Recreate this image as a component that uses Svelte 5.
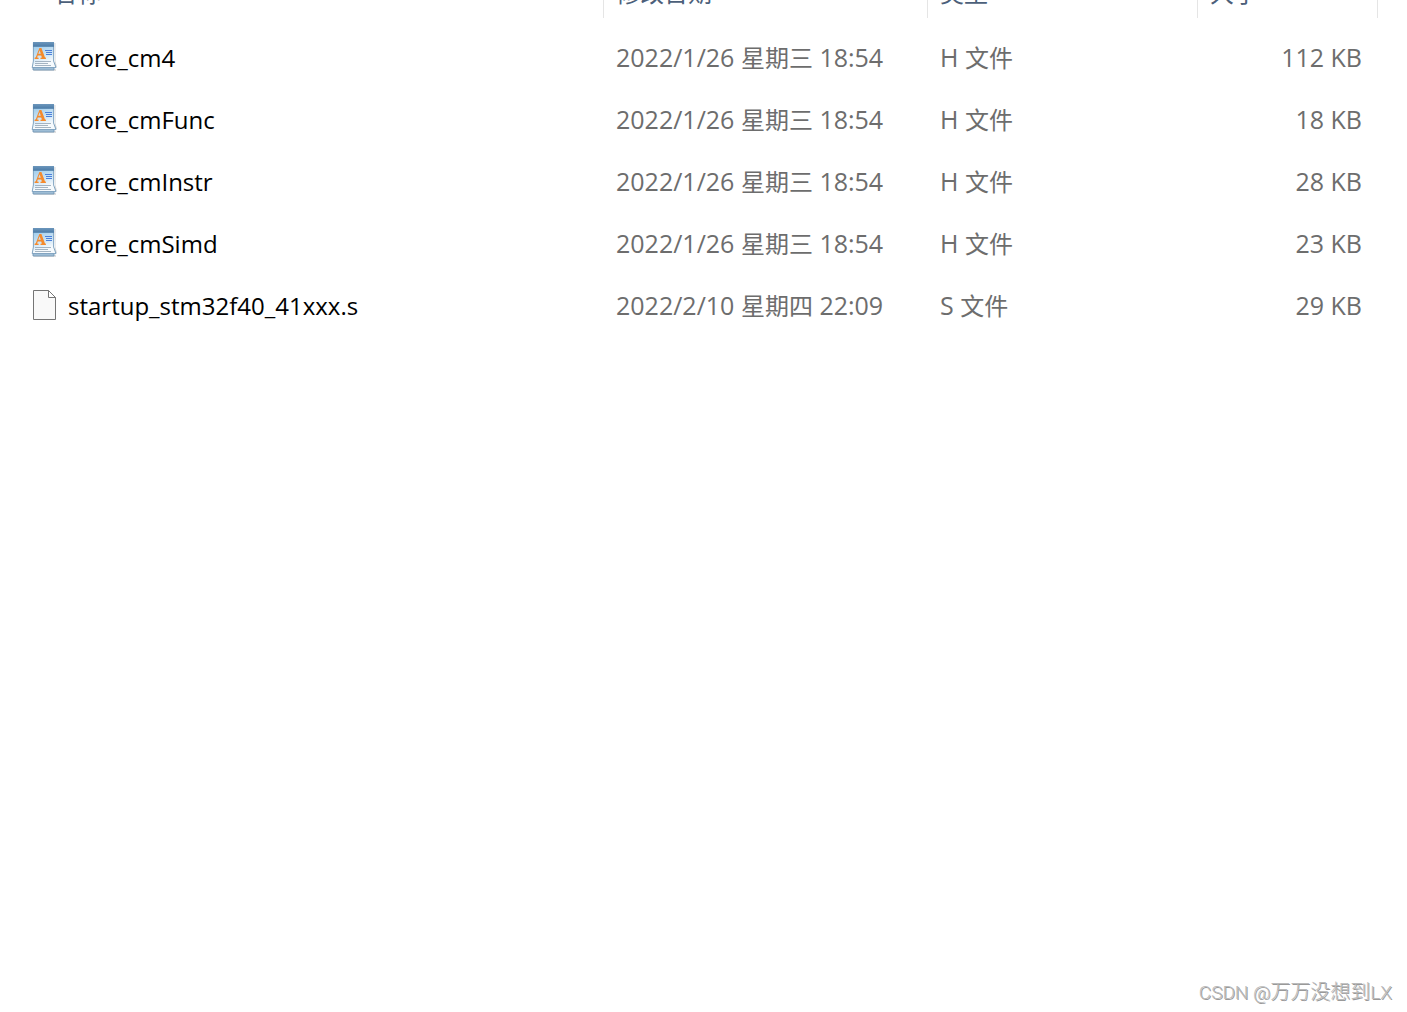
<script>
  const columns = ['名称', '修改日期', '类型', '大小'];
  const files = [
    { name: 'core_cm4', date: '2022/1/26', day: '星期三', time: '18:54', kind: 'H', size: '112 KB', icon: 'document' },
    { name: 'core_cmFunc', date: '2022/1/26', day: '星期三', time: '18:54', kind: 'H', size: '18 KB', icon: 'document' },
    { name: 'core_cmInstr', date: '2022/1/26', day: '星期三', time: '18:54', kind: 'H', size: '28 KB', icon: 'document' },
    { name: 'core_cmSimd', date: '2022/1/26', day: '星期三', time: '18:54', kind: 'H', size: '23 KB', icon: 'document' },
    { name: 'startup_stm32f40_41xxx.s', date: '2022/2/10', day: '星期四', time: '22:09', kind: 'S', size: '29 KB', icon: 'blank' }
  ];
</script>

<svg class="defs" aria-hidden="true">
  <defs>
    <linearGradient id="page" x1="0" y1="0" x2="0.3" y2="1">
      <stop offset="0.2" stop-color="#a5cfec" />
      <stop offset="0.6" stop-color="#cde5f6" />
      <stop offset="0.9" stop-color="#f6fafd" />
    </linearGradient>
    <linearGradient id="binding" x1="0" y1="0" x2="0" y2="1">
      <stop offset="0" stop-color="#6c96bc" />
      <stop offset="1" stop-color="#4a7ba7" />
    </linearGradient>
  </defs>
</svg>

<main>
  <table>
    <colgroup>
      <col />
      <col class="date-col" />
      <col class="type-col" />
      <col class="size-col" />
      <col class="end-col" />
    </colgroup>
    <thead>
      <tr>
        {#each columns as label}
          <th scope="col"><div class="head"><span>{label}</span></div></th>
        {/each}
        <td></td>
      </tr>
    </thead>
    <tbody>
      {#each files as file}
        <tr>
          <td class="name">
            <div class="file">
              {#if file.icon === 'document'}
                <svg class="icon" viewBox="0 1 28 32" aria-hidden="true">
                  <path d="M3 28h23v2H4z" fill="#000" opacity=".12" />
                  <path d="M24.500 2h1v18l1.500 6h-2z" fill="#000" opacity=".15" />
                  <path d="M3 26h21v3H3z" fill="#a3c1d8" stroke="#6d92b2" stroke-width=".8" />
                  <path d="M3.400 1.500h20.200v18.500l2.400 6.600H2.200l1.200-6.600z" fill="url(#page)" stroke="#749bba" stroke-width=".9" />
                  <path d="M3 1h21v4.800H3z" fill="url(#binding)" />
                  <path d="M4.600 18v-1.200l1.200-.5L9.400 7h2l3.500 9.300 1 .5V18h-5.400v-1.200l1.400-.4-.7-2H7.800l-.7 2 1.500.4V18zM8.300 12.800h2.500L9.600 9.200z" fill="#f58a2c" />
                  <path d="M15 9.500h7M16 11.500h6M16 13.500h6" stroke="#4b80dc" stroke-width="1" />
                  <path d="M5 20.500h16M5 22.500h13M5 24.500h16" stroke="#9babbb" stroke-width=".9" />
                </svg>
              {:else}
                <svg class="icon" viewBox="0 0 28 32" aria-hidden="true">
                  <path d="M3.500.500h15l7 7v22h-22z" fill="#f9f9f9" stroke="#757575" />
                  <path d="M18.500.500v7h7z" fill="#fff" stroke="#757575" />
                </svg>
              {/if}
              <span>{file.name}</span>
            </div>
          </td>
          <td>{file.date} <span class="han">{file.day}</span> {file.time}</td>
          <td>{file.kind} <span class="han">文件</span></td>
          <td class="size">{file.size}</td>
          <td></td>
        </tr>
      {/each}
    </tbody>
  </table>
  <footer>CSDN @<span class="author">万万没想到</span>LX</footer>
</main>

<style>
  :global(body) {
    background: #fff;
  }

  .defs {
    position: absolute;
    width: 0;
    height: 0;
  }

  main {
    display: flex;
    flex-direction: column;
    min-height: 100vh;
    font-family: 'Open Sans', 'Noto Sans CJK SC', sans-serif;
    font-size: 25px;
    line-height: 32px;
    color: #6d6d6d;
  }

  table {
    width: 100%;
    table-layout: fixed;
    border-collapse: separate;
    border-spacing: 0;
  }

  .date-col {
    width: 324px;
  }

  .type-col {
    width: 270px;
  }

  .size-col {
    width: 180px;
  }

  .end-col {
    width: 29px;
  }

  th,
  td {
    box-sizing: border-box;
    padding: 0 0 0 12px;
    text-align: left;
    font-weight: 400;
    white-space: nowrap;
  }

  th {
    border-right: 1px solid #e5e5e5;
    color: #4c607a;
    font-size: 24px;
  }

  th:first-child {
    padding-left: 53px;
  }

  .head {
    display: flex;
    align-items: flex-end;
    height: 18px;
    overflow: hidden;
  }

  .head span {
    padding-bottom: 11px;
    line-height: 28px;
  }

  tbody::before {
    content: '';
    display: block;
    height: 8px;
  }

  tbody td {
    height: 62px;
  }

  td.name {
    padding-top: 2px;
    padding-left: 30px;
    color: #000;
    font-size: 24px;
  }

  .file {
    display: flex;
    align-items: center;
    gap: 10px;
  }

  .icon {
    flex: none;
    width: 28px;
    height: 32px;
  }

  .han {
    font-size: 24px;
  }

  td.size {
    padding-right: 16px;
    text-align: right;
  }

  footer {
    margin-top: auto;
    padding: 0 15px 5px 0;
    font-family: Roboto, 'Noto Sans CJK SC', sans-serif;
    font-size: 19px;
    font-weight: 300;
    line-height: 28px;
    text-align: right;
    color: #bbb;
    text-shadow: 1px 1px 0 #999;
  }

  .author {
    font-size: 20px;
  }
</style>
